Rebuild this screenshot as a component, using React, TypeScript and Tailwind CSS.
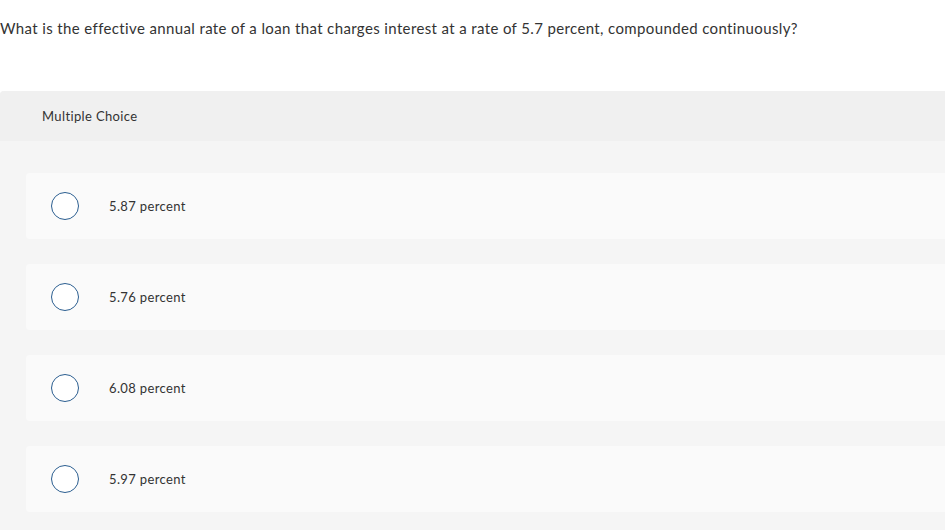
import React from "react";

const options = ["5.87 percent", "5.76 percent", "6.08 percent", "5.97 percent"];

export default function App() {
  return (
    <div className="w-[945px] h-[530px] overflow-hidden bg-white text-[#333333] tracking-[0.37px]" style={{ fontFamily: "Lato, 'Open Sans', sans-serif" }}>
      <div className="pt-[18px] h-[91px]">
        <p className="text-[15px] leading-[20px]">
          What is the effective annual rate of a loan that charges interest at a rate of 5.7 percent, compounded continuously?
        </p>
      </div>
      <div className="bg-[#f5f5f5] rounded-tl-[4px] overflow-hidden h-[439px]">
        <div className="h-[50px] bg-[#f0f0f0] flex items-center pl-[42px] pt-[2px] text-[13px]">Multiple Choice</div>
        <div className="flex flex-col gap-[25px] pt-[32px] pl-[26px]">
          {options.map((o) => (
            <div key={o} className="h-[66px] bg-[#fafafa] rounded-l-[4px] flex items-center">
              <div className="ml-[25px] w-[28px] h-[28px] rounded-full border-[1.5px] border-[#2b5e90] bg-white" />
              <span className="ml-[30px] pt-[2px] text-[13px]">{o}</span>
            </div>
          ))}
        </div>
      </div>
    </div>
  );
}
